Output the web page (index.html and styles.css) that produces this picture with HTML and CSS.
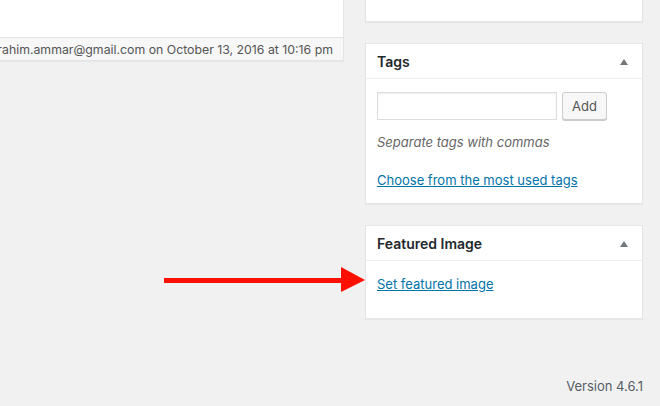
FILE: index.html
```html
<!DOCTYPE html>
<html>
<head>
<meta charset="utf-8">
<link rel="stylesheet" href="styles.css">
</head>
<body>
<div class="page">
  <div class="main">
    <div class="editor">
      <div class="editor-body"></div>
      <div class="status"><span class="last-edit">Last edited by ibrahim.ammar@gmail.com on October 13, 2016 at 10:16 pm</span></div>
    </div>
  </div>
  <div class="side">
    <div class="postbox top-box"></div>
    <div class="postbox tags-box">
      <div class="hndle"><h2>Tags</h2><span class="toggle"></span></div>
      <div class="inside">
        <div class="tag-row">
          <input class="tag-input" type="text">
          <button class="button">Add</button>
        </div>
        <p class="howto">Separate tags with commas</p>
        <p class="cloud"><a href="#">Choose from the most used tags</a></p>
      </div>
    </div>
    <div class="postbox">
      <div class="hndle"><h2>Featured Image</h2><span class="toggle"></span></div>
      <div class="inside featured">
        <a href="#">Set featured image</a>
      </div>
    </div>
  </div>
</div>
<div class="footer">Version 4.6.1</div>
<svg class="arrow" width="210" height="30" viewBox="0 0 210 30">
  <rect x="0" y="11" width="180" height="5" fill="#ff0f00"/>
  <polygon points="177,0 201,13 177,25" fill="#ff0f00"/>
</svg>
</body>
</html>
```
FILE: styles.css
```css
html, body {
  margin: 0;
  padding: 0;
  background: #f1f1f1;
  overflow: hidden;
  font-family: Inter, "Liberation Sans", sans-serif;
  font-size: 13px;
  color: #444;
}
body {
  width: 660px;
  height: 406px;
  position: relative;
}
.page {
  display: flex;
  gap: 21px;
  padding-right: 17px;
}
.main {
  width: 344px;
  flex: none;
}
.editor {
  background: #fff;
  border: 1px solid #e5e5e5;
  border-top: none;
  border-left: none;
  box-shadow: 0 1px 1px rgba(0,0,0,.04);
}
.editor-body {
  height: 37px;
}
.status {
  height: 22px;
  background: #f7f7f7;
  border-top: 1px solid #e5e5e5;
  display: flex;
  justify-content: flex-end;
  align-items: center;
  overflow: hidden;
  padding-right: 10px;
  white-space: nowrap;
  color: #555;
  font-size: 12.3px;
}
.side {
  width: 278px;
  flex: none;
}
.postbox {
  background: #fff;
  border: 1px solid #e5e5e5;
  box-shadow: 0 1px 1px rgba(0,0,0,.04);
  margin-bottom: 20px;
}
.top-box {
  height: 21px;
  border-top: none;
  margin-bottom: 21px;
}
.tags-box {
  margin-bottom: 21px;
}
.hndle {
  display: flex;
  align-items: center;
  justify-content: space-between;
  padding: 0 14px 0 11px;
  height: 34px;
  border-bottom: 1px solid #eee;
}
.hndle h2 {
  margin: 0;
  font-size: 14px;
  font-weight: 600;
  color: #23282d;
}
.toggle {
  width: 0;
  height: 0;
  border-left: 4px solid transparent;
  border-right: 4px solid transparent;
  border-bottom: 6px solid #72777c;
  margin-top: 2px;
}
.inside {
  padding: 13px 11px 13px;
}
.tag-row {
  display: flex;
  gap: 5px;
}
.tag-input {
  box-sizing: border-box;
  width: 180px;
  height: 28px;
  margin: 0;
  border: 1px solid #ddd;
  box-shadow: inset 0 1px 2px rgba(0,0,0,.07);
  padding: 0 6px;
  font: inherit;
}
.button {
  box-sizing: border-box;
  height: 28px;
  width: 45px;
  margin: 0;
  padding: 0 8px;
  background: #f7f7f7;
  border: 1px solid #ccc;
  border-radius: 3px;
  box-shadow: 0 1px 0 #ccc;
  color: #555;
  font: inherit;
  font-size: 13px;
}
.howto {
  margin: 12px 0 0;
  font-style: italic;
  color: #666;
  line-height: 20px;
}
.cloud {
  margin: 18px 0 0;
  line-height: 20px;
}
a {
  color: #0073aa;
  text-decoration: underline;
}
.featured {
  padding-top: 13px;
  padding-bottom: 24px;
  line-height: 20px;
}
.footer {
  position: absolute;
  right: 17px;
  top: 377px;
  line-height: 18px;
  color: #555d66;
}
.arrow {
  position: absolute;
  left: 164px;
  top: 267px;
}
```
